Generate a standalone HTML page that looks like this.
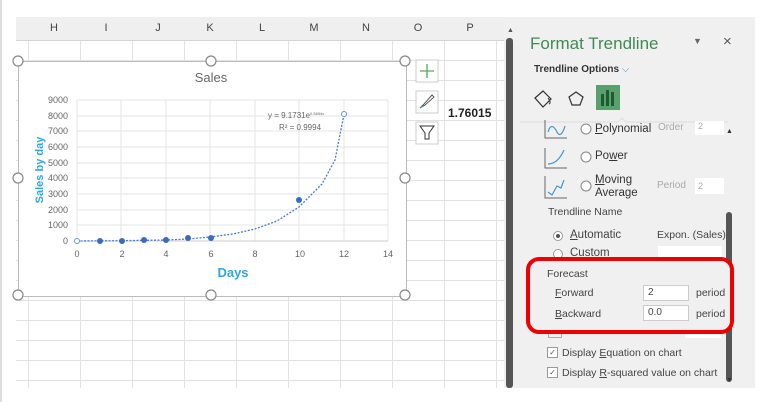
<!DOCTYPE html><html><head><style>
body{margin:0;width:768px;height:402px;background:#fff;position:relative;overflow:hidden;font-family:"Liberation Sans",sans-serif}
.a{position:absolute}
.hdr{left:16px;top:17px;width:488px;height:23px;background:#efefef;border-bottom:1px solid #d4d4d4}
.col{position:absolute;top:17px;font-size:11px;color:#444;width:52px;text-align:center;line-height:23px}
</style></head><body>
<div class="a" style="left:0;top:0;width:2px;height:402px;background:#ddd"></div>
<div class="a" style="left:16px;top:17px;width:488px;height:371px;background:#fff;
background-image:linear-gradient(#e2e2e2 1px,transparent 1px),linear-gradient(90deg,#e2e2e2 1px,transparent 1px);background-size:52px 20px,52px 20px;background-position:0 23px,12px 0"></div>
<div class="a hdr"></div>
<div class="col" style="left:28px">H</div><div class="col" style="left:80px">I</div><div class="col" style="left:132px">J</div><div class="col" style="left:184px">K</div><div class="col" style="left:236px">L</div><div class="col" style="left:288px">M</div><div class="col" style="left:340px">N</div><div class="col" style="left:392px">O</div><div class="col" style="left:444px">P</div>
<div class="a" style="left:504px;top:17px;width:14px;height:371px;background:#f0f0f0"></div>
<div class="a" style="left:506px;top:38px;width:7px;height:350px;background:#555;border-radius:3px"></div>
<div class="a" style="left:507px;top:27px;font-size:7px;color:#555">▲</div>
<div class="a" style="left:18px;top:61px;width:387px;height:234px;background:#fff;border:1px solid #bbb"></div>
<svg class="a" style="left:0;top:0" width="768" height="402">
<g fill="#fff" stroke="#888" stroke-width="1.2">
<circle cx="18" cy="61" r="5"/><circle cx="211" cy="61" r="5"/><circle cx="405" cy="61" r="5"/><circle cx="18" cy="178" r="5"/><circle cx="405" cy="178" r="5"/><circle cx="18" cy="295" r="5"/><circle cx="211" cy="295" r="5"/><circle cx="405" cy="295" r="5"/></g>
<g stroke="#e4e4e4" stroke-width="1">
<line x1="77" y1="100" x2="388" y2="100"/><line x1="77" y1="116" x2="388" y2="116"/><line x1="77" y1="131" x2="388" y2="131"/><line x1="77" y1="147" x2="388" y2="147"/><line x1="77" y1="163" x2="388" y2="163"/><line x1="77" y1="178" x2="388" y2="178"/><line x1="77" y1="194" x2="388" y2="194"/><line x1="77" y1="210" x2="388" y2="210"/><line x1="77" y1="225" x2="388" y2="225"/>
<line x1="77" y1="100" x2="77" y2="241"/><line x1="121" y1="100" x2="121" y2="241"/><line x1="166" y1="100" x2="166" y2="241"/><line x1="210" y1="100" x2="210" y2="241"/><line x1="255" y1="100" x2="255" y2="241"/><line x1="299" y1="100" x2="299" y2="241"/><line x1="344" y1="100" x2="344" y2="241"/><line x1="388" y1="100" x2="388" y2="241"/></g>
<line x1="77" y1="241" x2="388" y2="241" stroke="#ccc"/>
<path d="M77 241 L121 240.7 L166 240 L188 239 L210 237 L233 234 L255 229 L277 221 L299 207 L322 184 L335 160 L344 114" fill="none" stroke="#4a7bd0" stroke-width="1.3" stroke-dasharray="2 1.5"/>
<g fill="#3a6bc4"><circle cx="100" cy="241" r="3"/><circle cx="122" cy="241" r="3"/><circle cx="144" cy="240" r="3"/><circle cx="166" cy="240" r="3"/><circle cx="188" cy="238" r="3"/><circle cx="211" cy="238" r="3"/><circle cx="299" cy="200" r="3"/></g>
<circle cx="77" cy="241" r="2.5" fill="#fff" stroke="#5a9be0"/><circle cx="344" cy="114" r="2.5" fill="#fff" stroke="#5a9be0"/>
<g font-size="9" fill="#666" text-anchor="end"><text x="68" y="103">9000</text><text x="68" y="119">8000</text><text x="68" y="134">7000</text><text x="68" y="150">6000</text><text x="68" y="166">5000</text><text x="68" y="181">4000</text><text x="68" y="197">3000</text><text x="68" y="213">2000</text><text x="68" y="228">1000</text><text x="68" y="244">0</text></g>
<g font-size="9" fill="#666" text-anchor="middle"><text x="77" y="257">0</text><text x="122" y="257">2</text><text x="166" y="257">4</text><text x="211" y="257">6</text><text x="255" y="257">8</text><text x="300" y="257">10</text><text x="344" y="257">12</text><text x="388" y="257">14</text></g>
<text x="211" y="82" font-size="13" fill="#666" text-anchor="middle">Sales</text>
<text x="233" y="277" font-size="13" font-weight="bold" fill="#2aa8e8" text-anchor="middle">Days</text>
<text transform="translate(43,170) rotate(-90)" font-size="11" font-weight="bold" fill="#2aa8e8" text-anchor="middle">Sales by day</text>
<text x="268" y="118" font-size="8" fill="#666">y = 9.1731e<tspan font-size="4" dy="-3">0.5654x</tspan></text>
<text x="279" y="130" font-size="8" fill="#666">R² = 0.9994</text>
<g fill="#fff" stroke="#ccc"><rect x="416" y="60" width="22" height="22"/><rect x="416" y="91" width="22" height="22"/><rect x="416" y="122" width="22" height="22"/></g>
<path d="M427 64v14M420 71h14" stroke="#4caf50" stroke-width="1.3"/>
<path d="M420 108l4-4 8-9 2 2-9 8z" fill="#fff" stroke="#333" stroke-width="0.8"/><path d="M420 108l3-1-1-2z" fill="#3a8de0"/>
<path d="M420 126h14l-5 7v6h-4v-6z" fill="none" stroke="#333"/>
<text x="448" y="117" font-size="12" font-weight="bold" fill="#222">1.76015</text>
</svg>
<div class="a" style="left:518px;top:17px;width:237px;height:371px;background:#f0f0f0"></div>
<div class="a" style="left:530px;top:34px;font-size:17px;color:#3f8a55">Format Trendline</div>
<div class="a" style="left:693px;top:36px;font-size:9px;color:#666">▼</div>
<div class="a" style="left:723px;top:33px;font-size:15px;color:#555">×</div>
<div class="a" style="left:534px;top:64px;font-size:10px;font-weight:bold;color:#333">Trendline Options <span style="color:#4a90d9;font-weight:normal">⌵</span></div>
<svg class="a" style="left:518px;top:80px" width="237" height="50">
<path d="M17 18l8-7 8 8-8 8z" fill="none" stroke="#333" stroke-width="1.2"/><path d="M30 18c2 3 3 5 1 6" fill="none" stroke="#333"/>
<path d="M58 12l7 5-3 8h-8l-3-8z" fill="none" stroke="#333" stroke-width="1.2"/>
<rect x="78" y="5" width="24" height="25" fill="#5aa06c"/><g fill="#1f5b30"><rect x="83" y="14" width="3" height="12"/><rect x="88" y="10" width="3" height="16"/><rect x="93" y="12" width="3" height="14"/></g>
<path d="M2 42H100l4-4 4 4H210" fill="none" stroke="#ddd"/>
</svg>
<svg class="a" style="left:543px;top:120px" width="40" height="80">
<g fill="none" stroke="#666"><path d="M2 0v18h22"/><path d="M2 28v20h22"/><path d="M2 56v22h22"/></g>
<g fill="none" stroke="#3a9ad9" stroke-width="1.2"><path d="M5 12c3-10 7-4 9 0s5 4 8-6"/><path d="M5 44c7 0 12-5 16-14"/><path d="M5 72l4 3 5-9 4 2 3-8"/></g>
</svg>
<div class="a" style="left:569px;top:120px;font-size:11.5px;color:#333;line-height:13px">
<div style="position:absolute;left:26px;top:3px;white-space:nowrap"><u>P</u>olynomial</div>
<div style="position:absolute;left:26px;top:30px">Po<u>w</u>er</div>
<div style="position:absolute;left:26px;top:54px"><u>M</u>oving<br>Average</div></div>
<svg class="a" style="left:578px;top:120px" width="20" height="80"><g fill="#fff" stroke="#888"><circle cx="8" cy="9" r="5"/><circle cx="8" cy="37" r="5"/><circle cx="8" cy="66" r="5"/></g></svg>
<div class="a" style="left:658px;top:122px;font-size:10px;color:#aaa">Order</div>
<div class="a" style="left:657px;top:180px;font-size:10px;color:#aaa">Period</div>
<div class="a" style="left:695px;top:121px;width:26px;height:14px;background:#fff;font-size:9px;color:#aaa;padding-left:3px">2</div>
<div class="a" style="left:695px;top:178px;width:26px;height:16px;background:#fff;font-size:9px;color:#aaa;padding-left:3px;line-height:16px">2</div>
<div class="a" style="left:726px;top:212px;width:6px;height:170px;background:#555;border-radius:3px"></div>
<div class="a" style="left:726px;top:128px;font-size:7px;color:#333">▲</div><div class="a" style="left:726px;top:377px;font-size:7px;color:#333">▼</div>
<div class="a" style="left:548px;top:206px;font-size:10.5px;color:#444">Trendline Name</div>
<svg class="a" style="left:550px;top:228px" width="20" height="40"><g fill="#fff" stroke="#999"><circle cx="8" cy="8" r="4.5"/><circle cx="8" cy="26" r="4.5"/></g><circle cx="8" cy="8" r="2" fill="#555"/></svg>
<div class="a" style="left:570px;top:229px;font-size:11.5px;color:#444"><u>A</u>utomatic</div>
<div class="a" style="left:570px;top:247px;font-size:11.5px;color:#444">Custom</div>
<div class="a" style="left:657px;top:229px;font-size:10.5px;color:#444">Expon. (Sales)</div>
<div class="a" style="left:658px;top:246px;width:64px;height:12px;background:#fff"></div>
<div class="a" style="left:548px;top:328px;width:12px;height:8px;border:1px solid #aaa"></div>
<div class="a" style="left:685px;top:328px;width:36px;height:10px;background:#fff"></div>
<div class="a" style="left:526px;top:257px;width:200px;height:69px;border:4px solid #e00;border-radius:13px;background:#f0f0f0"></div>
<div class="a" style="left:547px;top:268px;font-size:10.5px;color:#444">Forecast</div>
<div class="a" style="left:555px;top:287px;font-size:10.5px;color:#444"><u>F</u>orward</div>
<div class="a" style="left:555px;top:308px;font-size:10.5px;color:#444"><u>B</u>ackward</div>
<div class="a" style="left:643px;top:285px;width:40px;height:14px;background:#fff;border:1px solid #ccc;font-size:10px;color:#444;padding-left:4px;line-height:14px">2</div>
<div class="a" style="left:643px;top:305px;width:40px;height:14px;background:#fff;border:1px solid #ccc;font-size:10px;color:#444;padding-left:4px;line-height:14px">0.0</div>
<div class="a" style="left:696px;top:287px;font-size:10.5px;color:#444">period</div>
<div class="a" style="left:696px;top:308px;font-size:10.5px;color:#444">period</div>
<div class="a" style="left:547px;top:347px;width:9px;height:9px;border:1px solid #999;background:#fff;font-size:8px;line-height:9px;text-align:center;color:#555">✓</div>
<div class="a" style="left:547px;top:367px;width:9px;height:9px;border:1px solid #999;background:#fff;font-size:8px;line-height:9px;text-align:center;color:#555">✓</div>
<div class="a" style="left:562px;top:347px;font-size:10.5px;color:#444">Display <u>E</u>quation on chart</div>
<div class="a" style="left:562px;top:367px;font-size:10.5px;color:#444">Display <u>R</u>-squared value on chart</div>
</body></html>
